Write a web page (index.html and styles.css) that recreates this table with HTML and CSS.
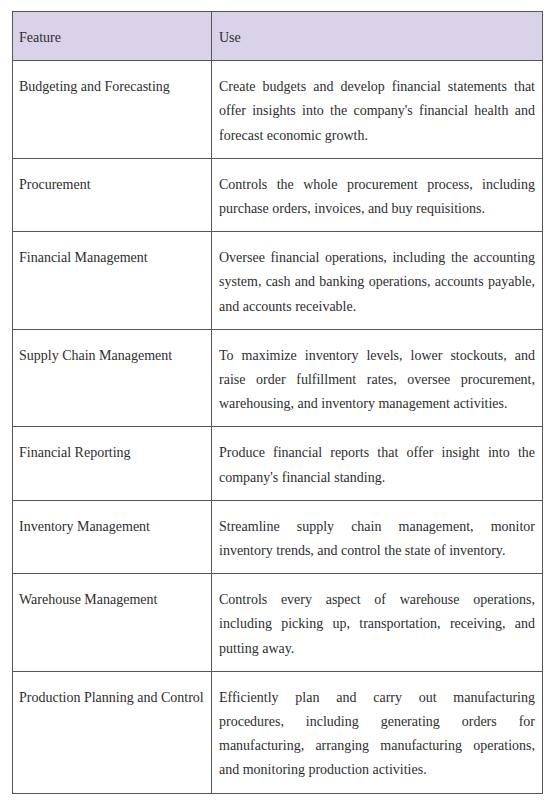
FILE: index.html
```html
<!DOCTYPE html>
<html lang="en">
<head>
<meta charset="utf-8">
<title>Features</title>
<link rel="stylesheet" href="styles.css">
</head>
<body>
<table class="feature-table">
  <thead>
    <tr>
      <th class="col-feature">Feature</th>
      <th class="col-use">Use</th>
    </tr>
  </thead>
  <tbody>
    <tr>
      <td class="col-feature">Budgeting and Forecasting</td>
      <td class="col-use">Create budgets and develop financial statements that offer insights into the company's financial health and forecast economic growth.</td>
    </tr>
    <tr>
      <td class="col-feature">Procurement</td>
      <td class="col-use">Controls the whole procurement process, including purchase orders, invoices, and buy requisitions.</td>
    </tr>
    <tr>
      <td class="col-feature">Financial Management</td>
      <td class="col-use">Oversee financial operations, including the accounting system, cash and banking operations, accounts payable, and accounts receivable.</td>
    </tr>
    <tr>
      <td class="col-feature">Supply Chain Management</td>
      <td class="col-use">To maximize inventory levels, lower stockouts, and raise order fulfillment rates, oversee procurement, warehousing, and inventory management activities.</td>
    </tr>
    <tr>
      <td class="col-feature">Financial Reporting</td>
      <td class="col-use">Produce financial reports that offer insight into the company's financial standing.</td>
    </tr>
    <tr>
      <td class="col-feature">Inventory Management</td>
      <td class="col-use">Streamline supply chain management, monitor inventory trends, and control the state of inventory.</td>
    </tr>
    <tr>
      <td class="col-feature">Warehouse Management</td>
      <td class="col-use">Controls every aspect of warehouse operations, including picking up, transportation, receiving, and putting away.</td>
    </tr>
    <tr>
      <td class="col-feature">Production Planning and Control</td>
      <td class="col-use">Efficiently plan and carry out manufacturing procedures, including generating orders for manufacturing, arranging manufacturing operations, and monitoring production activities.</td>
    </tr>
  </tbody>
</table>
</body>
</html>
```
FILE: styles.css
```css
html, body {
  margin: 0;
  padding: 0;
  background: #ffffff;
}

body {
  padding: 11px 0 0 12px;
  font-family: "Liberation Serif", "Times New Roman", serif;
  font-size: 14px;
  color: #2e2e2e;
}

.feature-table {
  border-collapse: collapse;
  width: 531px;
  table-layout: fixed;
  border: 1px solid #222222;
}

.feature-table th,
.feature-table td {
  border: 1px solid #555555;
  padding: 14px 6px 10px 6px;
  line-height: 24.2px;
  vertical-align: top;
  font-weight: normal;
  text-align: left;
}

.feature-table tr {
  border-top: 1px solid #222222;
  border-bottom: 1px solid #222222;
}

.feature-table thead th {
  background: #d9d2e9;
}

.feature-table .col-feature {
  width: 186px;
}

.feature-table .col-use {
  padding-left: 7px;
  padding-right: 7px;
  text-align: justify;
}

.feature-table thead .col-use {
  text-align: left;
}
```
